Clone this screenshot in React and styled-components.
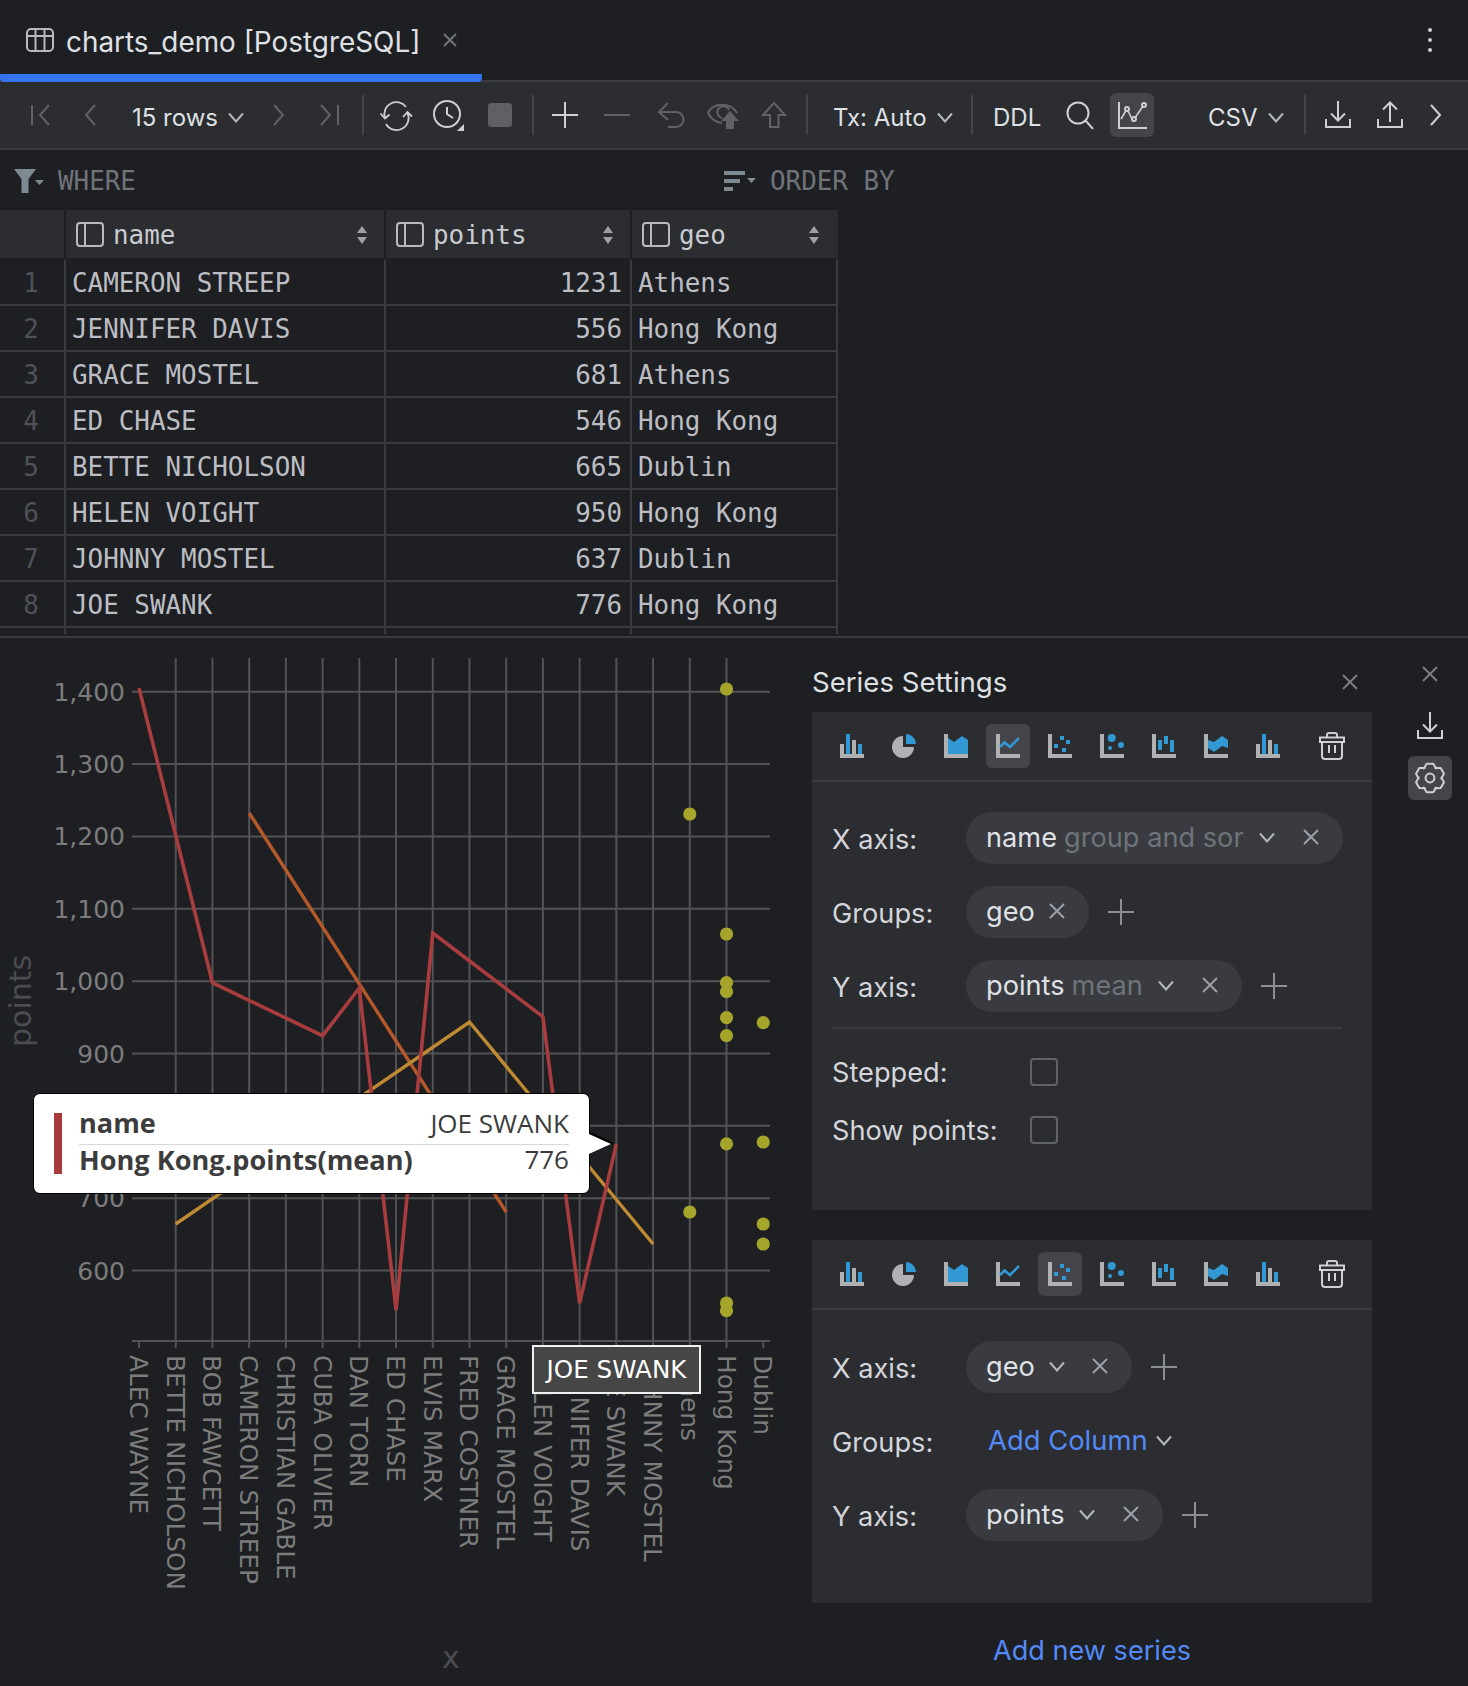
import React from "react";
import styled, { createGlobalStyle } from "styled-components";

const MONO = `"DejaVu Sans Mono", "Liberation Mono", monospace`;
const SANS = `Inter, "Noto Sans", sans-serif`;
const CHART = `"DejaVu Sans", sans-serif`;

const ON = "#ced0d6";
const OFF = "#5f6268";
const BLUE = "#3399d4";
const GRAY = "#afb1b3";

const Global = createGlobalStyle`
  html, body { margin: 0; padding: 0; background: #1e1f22; }
  * { box-sizing: border-box; }
  body { font-family: ${SANS}; }
`;

const Page = styled.div`
  width: 1468px;
  height: 1686px;
  overflow: hidden;
  display: flex;
  flex-direction: column;
  background: #1e1f22;
  color: #dfe1e5;
`;

/* ---------- tabs ---------- */
const TabBar = styled.div`
  height: 82px;
  flex: none;
  display: flex;
  align-items: flex-start;
  justify-content: space-between;
  border-bottom: 2px solid #393b40;
`;
const Tab = styled.div`
  width: 482px;
  height: 82px;
  padding: 28px 0 0 26px;
  display: flex;
  align-items: flex-start;
  border-bottom: 8px solid #3574f0;
  border-radius: 0 0 4px 4px;
`;
const TabTitle = styled.span`
  font-size: 27.9px;
  line-height: 28px;
  margin-left: 12px;
  color: #dfe1e5;
  white-space: nowrap;
`;
const TabClose = styled.span`
  display: flex;
  margin: 4px 0 0 22px;
`;
const Kebab = styled.div`
  margin: 28px 36px 0 0;
  display: flex;
  flex-direction: column;
  gap: 6px;
  span {
    width: 4px;
    height: 4px;
    border-radius: 50%;
    background: ${ON};
  }
`;

/* ---------- toolbar ---------- */
const Toolbar = styled.div`
  height: 68px;
  flex: none;
  display: flex;
  align-items: center;
  padding-left: 19px;
  background: #2b2d30;
  border-bottom: 2px solid #393b40;
`;
const Btn = styled.div`
  width: 44px;
  height: 44px;
  flex: none;
  display: flex;
  align-items: center;
  justify-content: center;
  margin-left: ${(p) => p.$ml ?? 0}px;
  border-radius: 6px;
  background: ${(p) => (p.$active ? "#43454a" : "transparent")};
`;
const Sep = styled.div`
  width: 2px;
  height: 40px;
  flex: none;
  margin-left: ${(p) => p.$ml ?? 10}px;
  background: #43454a;
`;
const ToolText = styled.div`
  flex: none;
  width: ${(p) => p.$w}px;
  margin-left: ${(p) => p.$ml ?? 0}px;
  padding-top: 4px;
  display: flex;
  align-items: center;
  gap: 9px;
  font-size: 24px;
  color: #dfe1e5;
  white-space: nowrap;
`;

/* ---------- filter row ---------- */
const FilterRow = styled.div`
  height: 60px;
  flex: none;
  display: flex;
  align-items: center;
  padding: 2px 0 0 14px;
  font-family: ${MONO};
  font-size: 25.9px;
  color: #6f737a;
`;
const FilterPart = styled.div`
  display: flex;
  align-items: center;
  gap: 14px;
  width: ${(p) => p.$w}px;
`;

/* ---------- table ---------- */
const Table = styled.div`
  width: 838px;
  height: 424px;
  flex: none;
  overflow: hidden;
  font-family: ${MONO};
  font-size: 25.9px;
`;
const HeadRow = styled.div`
  height: 48px;
  display: grid;
  grid-template-columns: 64px 320px 246px 206px;
  background: #2b2d30;
`;
const HeadCell = styled.div`
  display: flex;
  align-items: center;
  gap: 9px;
  padding: 2px 0 0 10px;
  border-left: 2px solid #1e1f22;
  color: #c9cbd0;
`;
const SortMark = styled.span`
  display: flex;
  margin-left: auto;
  margin-right: 16px;
`;
const RowNoHead = styled.div``;
const Body = styled.div`
  padding-top: 2px;
`;
const Row = styled.div`
  height: ${(p) => p.$h ?? 46}px;
  display: grid;
  grid-template-columns: 64px 320px 246px 208px;
  align-items: stretch;
  border-bottom: ${(p) => (p.$h ? "0" : "2px solid #393b40")};
  color: #bcbec4;
`;
const NumCell = styled.div`
  display: flex;
  align-items: center;
  justify-content: center;
  padding: 2px 2px 0 0;
  color: #4e5157;
`;
const Cell = styled.div`
  display: flex;
  align-items: center;
  justify-content: ${(p) => (p.$right ? "flex-end" : "flex-start")};
  padding: 2px 8px 0 6px;
  border-left: 2px solid #393b40;
  border-right: ${(p) => (p.$last ? "2px solid #393b40" : "0")};
  white-space: nowrap;
`;

const PaneLine = styled.div`
  height: 2px;
  flex: none;
  margin-top: 2px;
  background: #393b40;
`;

/* ---------- bottom pane ---------- */
const Pane = styled.div`
  flex: 1;
  display: flex;
  min-height: 0;
`;
const ChartArea = styled.div`
  position: relative;
  width: 812px;
  flex: none;
`;
const ChartSvg = styled.svg`
  display: block;
  width: 812px;
  height: 1048px;
  text {
    font-family: ${CHART};
  }
`;
const Tooltip = styled.div`
  position: absolute;
  left: 33px;
  top: 455px;
  width: 557px;
  height: 101px;
  padding: 0 20px;
  display: flex;
  align-items: center;
  gap: 17px;
  background: #fff;
  border: 1px solid #000;
  border-radius: 7px;
  font-family: "Open Sans", ${CHART};
  color: #3c3c3c;
  &::before {
    content: "";
    position: absolute;
    right: -25px;
    top: 38px;
    border-left: 24px solid #000;
    border-top: 11px solid transparent;
    border-bottom: 11px solid transparent;
  }
  &::after {
    content: "";
    position: absolute;
    right: -22px;
    top: 40px;
    border-left: 22px solid #fff;
    border-top: 10px solid transparent;
    border-bottom: 10px solid transparent;
  }
`;
const TipBar = styled.div`
  width: 8px;
  height: 61px;
  flex: none;
  background: #a63a3c;
`;
const TipRows = styled.div`
  flex: 1;
  display: flex;
  flex-direction: column;
`;
const TipRow = styled.div`
  height: 36px;
  padding-bottom: 6px;
  display: flex;
  align-items: center;
  justify-content: space-between;
  font-size: 26px;
  border-top: ${(p) => (p.$line ? "1px solid #d8d8d8" : "0")};
  b {
    font-size: 27.1px;
    font-weight: 700;
  }
`;

/* ---------- settings ---------- */
const Settings = styled.div`
  width: 560px;
  flex: none;
  display: flex;
  flex-direction: column;
`;
const SettingsHead = styled.div`
  height: 74px;
  display: flex;
  align-items: center;
  justify-content: space-between;
  padding: 14px 13px 0 0;
  font-size: 27.6px;
  color: #dfe1e5;
`;
const Card = styled.div`
  background: #2b2d30;
  margin-bottom: 30px;
`;
const CardTools = styled.div`
  height: 70px;
  display: flex;
  align-items: center;
  padding-left: 18px;
  gap: 8px;
  border-bottom: 2px solid #393b40;
`;
const TrashBtn = styled(Btn)`
  margin-left: 12px;
`;
const CardBody = styled.div`
  padding: ${(p) => p.$top}px 30px ${(p) => p.$bottom}px 20px;
  display: flex;
  flex-direction: column;
  gap: 22px;
`;
const FieldRow = styled.div`
  height: 52px;
  display: flex;
  align-items: center;
`;
const FieldLabel = styled.div`
  width: 134px;
  flex: none;
  font-size: 27.2px;
  color: #d4d6dc;
  padding-top: 3px;
`;
const Pill = styled.div`
  height: 52px;
  display: flex;
  align-items: center;
  padding: 0 23px 2px 20px;
  border-radius: 26px;
  background: #393b40;
  font-size: 27.2px;
  color: #dfe1e5;
  white-space: nowrap;
`;
const Muted = styled.span`
  color: #6f737a;
  margin-left: 7px;
`;
const PillIcon = styled.span`
  display: flex;
  margin-left: ${(p) => p.$ml}px;
`;
const AddBtn = styled.span`
  display: flex;
  margin-left: 19px;
`;
const Rule = styled.div`
  height: 2px;
  margin: -7px 0 7px;
  background: #393b40;
`;
const CheckRow = styled.div`
  height: 28px;
  display: flex;
  align-items: center;
  margin-top: ${(p) => p.$mt ?? 0}px;
`;
const CheckLabel = styled.div`
  width: 198px;
  flex: none;
  font-size: 27.2px;
  color: #d4d6dc;
`;
const Check = styled.div`
  width: 28px;
  height: 28px;
  border: 2px solid #5f6268;
  border-radius: 4px;
`;
const LinkText = styled.div`
  display: flex;
  align-items: center;
  gap: 7px;
  margin-left: 22px;
  font-size: 27.4px;
  color: #548af7;
  padding-bottom: 2px;
`;
const AddSeries = styled.div`
  margin-top: 1px;
  text-align: center;
  font-size: 27.1px;
  color: #548af7;
`;
const Rail = styled.div`
  margin-left: 36px;
  padding-top: 14px;
  display: flex;
  flex-direction: column;
  gap: 8px;
`;

/* ---------- icons ---------- */
const Glyph = styled.svg.attrs((p) => ({
  width: p.$s ?? 24,
  height: p.$s ?? 24,
  viewBox: `0 0 ${p.$s ?? 24} ${p.$s ?? 24}`,
  fill: "none",
}))`
  display: block;
  flex: none;
  color: ${(p) => p.$c ?? ON};
  stroke: currentColor;
  stroke-width: ${(p) => p.$w ?? 2};
`;

const Chevron = ({ c = "#b4b8bf" }) => (
  <Glyph $s={18} $c={c}>
    <path d="M2 5.5l7 8 7-8" />
  </Glyph>
);
const Cross = ({ c = "#9da0a8", s = 18 }) => (
  <Glyph $s={s} $c={c}>
    <path d={`M2 2L${s - 2} ${s - 2}M${s - 2} 2L2 ${s - 2}`} />
  </Glyph>
);
const Plus = ({ c = "#8c8f96", s = 26 }) => (
  <Glyph $s={s} $c={c}>
    <path d={`M${s / 2} 0V${s}M0 ${s / 2}H${s}`} />
  </Glyph>
);
const TableIcon = () => (
  <Glyph $s={28} $c="#b8bac0">
    <rect x="1" y="1" width="26" height="22" rx="4" />
    <path d="M1 8H27M9.5 1V23M18.5 1V23" />
  </Glyph>
);
const ColIcon = () => (
  <Glyph $s={28} $c="#b8bac0">
    <rect x="1" y="2" width="26" height="23" rx="3" />
    <path d="M9 2V25" />
  </Glyph>
);
const SortIcon = () => (
  <svg width="12" height="18" viewBox="0 0 12 18" fill="#9da0a8">
    <path d="M6 0l5 7H1zM6 18l5-7H1z" />
  </svg>
);
const FirstIcon = () => (
  <Glyph $c={OFF}>
    <path d="M3 2V22M20 2l-9 10 9 10" />
  </Glyph>
);
const PrevIcon = () => (
  <Glyph $c={OFF}>
    <path d="M16 2l-9 10 9 10" />
  </Glyph>
);
const NextIcon = ({ c = OFF }) => (
  <Glyph $c={c}>
    <path d="M8 2l9 10-9 10" />
  </Glyph>
);
const LastIcon = () => (
  <Glyph $c={OFF}>
    <path d="M21 2V22M4 2l9 10-9 10" />
  </Glyph>
);
const RefreshIcon = () => (
  <Glyph $s={34} $w={1.8}>
    <path d="M6 20A12 12 0 0 1 27 9" />
    <path d="M28 14A12 12 0 0 1 7 26" />
    <path d="M1.5 15.5L6 20.5l4.5-4" />
    <path d="M24 19l4.5-5 4.5 4.5" />
  </Glyph>
);
const ClockIcon = () => (
  <Glyph $s={34}>
    <circle cx="16" cy="16" r="13" />
    <path d="M16 9v7l6 4" />
    <path d="M33 26v7h-7z" fill={ON} stroke="none" />
  </Glyph>
);
const StopIcon = () => (
  <svg width="24" height="24" viewBox="0 0 24 24">
    <rect width="24" height="24" rx="3.5" fill="#5f6063" />
  </svg>
);
const MinusIcon = () => (
  <Glyph $s={26} $c={OFF}>
    <path d="M0 13H26" />
  </Glyph>
);
const UndoIcon = () => (
  <Glyph $s={28} $c={OFF}>
    <path d="M11 2L2 11l9 8" />
    <path d="M2 11H19a7.5 7.5 0 0 1 0 15H11" />
  </Glyph>
);
const EyeUpIcon = () => (
  <Glyph $s={34} $c={OFF}>
    <path d="M2 15C7 4 25 4 31 15" />
    <path d="M2 15C5 21 9 24 16 25" />
    <path d="M16 20a6 6 0 1 1 7-8" />
    <path d="M24 13l9 10h-5v8h-8v-8h-5z" fill={OFF} stroke="none" />
  </Glyph>
);
const UpIcon = () => (
  <Glyph $s={26} $c={OFF}>
    <path d="M13 1L24 13H17.5V25H9V13H2z" />
  </Glyph>
);
const SearchIcon = () => (
  <Glyph $s={28}>
    <circle cx="12" cy="12" r="10.5" />
    <path d="M19.5 19.5L27 28" />
  </Glyph>
);
const TrendIcon = () => (
  <Glyph $s={30}>
    <path d="M2 2V28H30" />
    <path d="M4 19L10 9l6 12L26 6" strokeWidth="1.6" />
    <circle cx="10" cy="9" r="2" fill="#43454a" />
    <circle cx="17" cy="19" r="2" fill="#43454a" />
    <circle cx="27" cy="5" r="2" fill="#43454a" />
  </Glyph>
);
const DownloadIcon = () => (
  <Glyph $s={28}>
    <path d="M14 0V19M7 12.5l7 7 7-7" />
    <path d="M2 18V26H26V18" />
  </Glyph>
);
const UploadIcon = () => (
  <Glyph $s={28}>
    <path d="M14 2V21M7 8.5l7-7 7 7" />
    <path d="M2 18V26H26V18" />
  </Glyph>
);
const FilterIcon = () => (
  <svg width="30" height="24" viewBox="0 0 30 24" fill="#7d8a91">
    <path d="M0 0H22L14.5 10V24H7.5V10z" />
    <path d="M21 11h9l-4.5 5z" />
  </svg>
);
const OrderIcon = () => (
  <svg width="32" height="20" viewBox="0 0 32 20" fill="#7d8a91">
    <rect width="21" height="4" />
    <rect y="8" width="16" height="4" />
    <rect y="16" width="9" height="4" />
    <path d="M23 7h9l-4.5 5z" />
  </svg>
);
// six lobes, flat on top, as the IDE's gear
const gearPath = Array.from({ length: 6 }, (_, k) => {
  const at = (deg, r) => {
    const a = ((k * 60 - 90 + deg) * Math.PI) / 180;
    return `${(16 + r * Math.cos(a)).toFixed(2)} ${(16 + r * Math.sin(a)).toFixed(2)}`;
  };
  return `${k === 0 ? "M" : "L"}${at(-33, 11.4)}L${at(-13, 14.6)}L${at(13, 14.6)}L${at(33, 11.4)}`;
}).join("") + "Z";
const GearIcon = () => (
  <Glyph $s={32}>
    <path d={gearPath} strokeLinejoin="round" />
    <circle cx="16" cy="16" r="4.4" />
  </Glyph>
);
const TrashIcon = () => (
  <Glyph $s={28} $c="#ced0d6">
    <path d="M1 5.5H25V10H1z" transform="translate(1 0)" />
    <path d="M9 5V3a2 2 0 0 1 2-2h6a2 2 0 0 1 2 2v2" />
    <path d="M4 10V24a3 3 0 0 0 3 3H21a3 3 0 0 0 3-3V10" />
    <path d="M11 13V21M17 13V21" />
  </Glyph>
);

const Axes = () => <path d="M0 0H4V20H24V24H0z" fill={GRAY} />;
const ChartGlyph = ({ children }) => (
  <svg width="24" height="24" viewBox="0 0 24 24">
    {children}
  </svg>
);
const BarsGlyph = () => (
  <ChartGlyph>
    <path d="M0 20H24V24H0zM0 10H4V20H0zM12 6H16V20H12z" fill={GRAY} />
    <path d="M6 0H10V20H6zM18 10H22V20H18z" fill={BLUE} />
  </ChartGlyph>
);
const seriesIcons = [
  BarsGlyph,
  () => (
    <ChartGlyph>
      <path d="M11 2A11 11 0 1 0 22 13H11z" fill={GRAY} />
      <path d="M14 0A10 10 0 0 1 24 10H14z" fill={BLUE} />
    </ChartGlyph>
  ),
  () => (
    <ChartGlyph>
      <Axes />
      <path d="M4 4L10 8L18 2L24 6V20H4z" fill={BLUE} />
    </ChartGlyph>
  ),
  () => (
    <ChartGlyph>
      <Axes />
      <path d="M4 13L8.5 8.5L14 13L23 4" fill="none" stroke={BLUE} strokeWidth="2.6" />
    </ChartGlyph>
  ),
  () => (
    <ChartGlyph>
      <Axes />
      <path d="M6 10h4v4H6zM12 2h4v4h-4zM14 14h4v4h-4zM18 6h4v4h-4z" fill={BLUE} />
    </ChartGlyph>
  ),
  () => (
    <ChartGlyph>
      <Axes />
      <circle cx="11.7" cy="4" r="4" fill={BLUE} />
      <circle cx="21" cy="11" r="3" fill={BLUE} />
      <circle cx="10" cy="14" r="2" fill={BLUE} />
    </ChartGlyph>
  ),
  () => (
    <ChartGlyph>
      <Axes />
      <path d="M6 6h4v10H6zM12 2h4v8h-4zM18 6h4v12h-4z" fill={BLUE} />
    </ChartGlyph>
  ),
  () => (
    <ChartGlyph>
      <Axes />
      <path d="M4 6L10 8L18 2L24 6V14L18 12L10 18L4 14z" fill={BLUE} />
    </ChartGlyph>
  ),
  BarsGlyph,
];

/* ---------- data ---------- */
const rows = [
  ["CAMERON STREEP", 1231, "Athens"],
  ["JENNIFER DAVIS", 556, "Hong Kong"],
  ["GRACE MOSTEL", 681, "Athens"],
  ["ED CHASE", 546, "Hong Kong"],
  ["BETTE NICHOLSON", 665, "Dublin"],
  ["HELEN VOIGHT", 950, "Hong Kong"],
  ["JOHNNY MOSTEL", 637, "Dublin"],
  ["JOE SWANK", 776, "Hong Kong"],
];

const cats = [
  "ALEC WAYNE", "BETTE NICHOLSON", "BOB FAWCETT", "CAMERON STREEP", "CHRISTIAN GABLE",
  "CUBA OLIVIER", "DAN TORN", "ED CHASE", "ELVIS MARX", "FRED COSTNER", "GRACE MOSTEL",
  "HELEN VOIGHT", "JENNIFER DAVIS", "JOE SWANK", "JOHNNY MOSTEL", "Athens", "Hong Kong", "Dublin",
];
const xAt = (i) => 139 + i * 36.72;
const ticks = [1400, 1300, 1200, 1100, 1000, 900, 800, 700, 600];
const yAt = (v) => 691.7 + (1400 - v) * 0.7236;

const redLine = [[0, 688], [2, 982.7], [5, 1035.7], [6, 988], [7, 1310], [8, 933], [11, 1016.7], [12, 1303], [13, 1144]];
const rustLine = [[3, 813], [10, 1212]];
const amberLine = [[1, 1224], [9, 1022], [14, 1244]];
const dots = [
  [15, 814], [15, 1212],
  [16, 689], [16, 934], [16, 982.7], [16, 991.7], [16, 1017.7], [16, 1035.7], [16, 1143.8], [16, 1303], [16, 1310.7],
  [17, 1022.7], [17, 1142], [17, 1224], [17, 1244],
];
const toPoints = (line) => line.map(([i, y]) => `${xAt(i)},${y}`).join(" ");

const Chart = () => (
  <ChartSvg viewBox="0 638 812 1048">
    {ticks.map((v) => (
      <g key={v}>
        <line x1="132" x2="770" y1={yAt(v)} y2={yAt(v)} stroke="#525355" strokeWidth="2" />
        {v !== 800 && (
          <text x="125" y={yAt(v) + 9} textAnchor="end" fontSize="25" fill="#7c7c7c">
            {v.toLocaleString("en-US")}
          </text>
        )}
      </g>
    ))}
    {cats.map((c, i) => (
      <g key={c}>
        {i > 0 && i < 17 && (
          <line x1={xAt(i)} x2={xAt(i)} y1="658" y2="1341" stroke="#525355" strokeWidth="2" />
        )}
        <line x1={xAt(i)} x2={xAt(i)} y1="1341" y2="1348" stroke="#525355" strokeWidth="2" />
      </g>
    ))}
    <line x1="132" x2="770" y1="1341" y2="1341" stroke="#525355" strokeWidth="2" />
    {cats.map((c, i) => (
      <text
        key={c}
        transform={`translate(${xAt(i) - 9} 1355) rotate(90)`}
        fontSize="24.8"
        fill="#7c7c7c"
      >
        {c}
      </text>
    ))}
    <polyline points={toPoints(rustLine)} fill="none" stroke="#b5592a" strokeWidth="3.4" />
    <polyline points={toPoints(amberLine)} fill="none" stroke="#c08a33" strokeWidth="3.4" />
    <polyline points={toPoints(redLine)} fill="none" stroke="#a83c3e" strokeWidth="3.6" />
    {dots.map(([i, y]) => (
      <circle key={`${i}-${y}`} cx={xAt(i)} cy={y} r="6.6" fill="#a5a52b" />
    ))}
    <rect x="533" y="1346" width="167" height="47" fill="#464646" stroke="#f0f0f0" strokeWidth="2" />
    <text x="616.5" y="1377.5" textAnchor="middle" fontSize="24.6" fill="#fff">JOE SWANK</text>
    <text transform="translate(31 1047) rotate(-90)" fontSize="30" fill="#4a4c50">points</text>
    <text x="451" y="1668" textAnchor="middle" fontSize="30" fill="#4a4c50">x</text>
  </ChartSvg>
);

const Tools = ({ active }) => (
  <CardTools>
    {seriesIcons.map((Icon, i) => (
      <Btn key={i} $active={i === active}>
        <Icon />
      </Btn>
    ))}
    <TrashBtn>
      <TrashIcon />
    </TrashBtn>
  </CardTools>
);

export default function App() {
  return (
    <Page>
      <Global />
      <TabBar>
        <Tab>
          <TableIcon />
          <TabTitle>charts_demo [PostgreSQL]</TabTitle>
          <TabClose>
            <Cross c="#6f737a" s={16} />
          </TabClose>
        </Tab>
        <Kebab>
          <span />
          <span />
          <span />
        </Kebab>
      </TabBar>

      <Toolbar>
        <Btn><FirstIcon /></Btn>
        <Btn $ml={6}><PrevIcon /></Btn>
        <ToolText $w={112} $ml={19}>15 rows <Chevron /></ToolText>
        <Btn $ml={12}><NextIcon /></Btn>
        <Btn $ml={7}><LastIcon /></Btn>
        <Sep $ml={11} />
        <Btn $ml={10}><RefreshIcon /></Btn>
        <Btn $ml={8}><ClockIcon /></Btn>
        <Btn $ml={8}><StopIcon /></Btn>
        <Sep />
        <Btn $ml={9}><Plus c={ON} /></Btn>
        <Btn $ml={8}><MinusIcon /></Btn>
        <Btn $ml={10}><UndoIcon /></Btn>
        <Btn $ml={8}><EyeUpIcon /></Btn>
        <Btn $ml={7}><UpIcon /></Btn>
        <Sep />
        <ToolText $w={123} $ml={25}>Tx: Auto <Chevron /></ToolText>
        <Sep $ml={15} />
        <ToolText $w={55} $ml={20}>DDL</ToolText>
        <Btn $ml={10}><SearchIcon /></Btn>
        <Btn $ml={8} $active><TrendIcon /></Btn>
        <ToolText $w={87} $ml={54}>CSV <Chevron /></ToolText>
        <Sep $ml={9} />
        <Btn $ml={10}><DownloadIcon /></Btn>
        <Btn $ml={8}><UploadIcon /></Btn>
        <Btn $ml={1}><NextIcon c={ON} /></Btn>
      </Toolbar>

      <FilterRow>
        <FilterPart $w={710}><FilterIcon /> WHERE</FilterPart>
        <FilterPart><OrderIcon /> ORDER BY</FilterPart>
      </FilterRow>

      <Table>
        <HeadRow>
          <RowNoHead />
          <HeadCell><ColIcon /> name <SortMark><SortIcon /></SortMark></HeadCell>
          <HeadCell><ColIcon /> points <SortMark><SortIcon /></SortMark></HeadCell>
          <HeadCell><ColIcon /> geo <SortMark><SortIcon /></SortMark></HeadCell>
        </HeadRow>
        <Body>
          {rows.map(([name, points, geo], i) => (
            <Row key={name}>
              <NumCell>{i + 1}</NumCell>
              <Cell>{name}</Cell>
              <Cell $right>{points}</Cell>
              <Cell $last>{geo}</Cell>
            </Row>
          ))}
          <Row $h={6}>
            <NumCell />
            <Cell />
            <Cell />
            <Cell $last />
          </Row>
        </Body>
      </Table>
      <PaneLine />

      <Pane>
        <ChartArea>
          <Chart />
          <Tooltip>
            <TipBar />
            <TipRows>
              <TipRow><b>name</b><span>JOE SWANK</span></TipRow>
              <TipRow $line><b>Hong Kong.points(mean)</b><span>776</span></TipRow>
            </TipRows>
          </Tooltip>
        </ChartArea>

        <Settings>
          <SettingsHead>
            Series Settings
            <Cross c="#7a7d84" />
          </SettingsHead>

          <Card>
            <Tools active={3} />
            <CardBody $top={30} $bottom={66}>
              <FieldRow>
                <FieldLabel>X axis:</FieldLabel>
                <Pill>
                  name<Muted>group and sor</Muted>
                  <PillIcon $ml={14}><Chevron /></PillIcon>
                  <PillIcon $ml={26}><Cross /></PillIcon>
                </Pill>
              </FieldRow>
              <FieldRow>
                <FieldLabel>Groups:</FieldLabel>
                <Pill>
                  geo
                  <PillIcon $ml={13}><Cross /></PillIcon>
                </Pill>
                <AddBtn><Plus /></AddBtn>
              </FieldRow>
              <FieldRow>
                <FieldLabel>Y axis:</FieldLabel>
                <Pill>
                  points<Muted>mean</Muted>
                  <PillIcon $ml={14}><Chevron /></PillIcon>
                  <PillIcon $ml={26}><Cross /></PillIcon>
                </Pill>
                <AddBtn><Plus /></AddBtn>
              </FieldRow>
              <Rule />
              <CheckRow $mt={0}>
                <CheckLabel>Stepped:</CheckLabel>
                <Check />
              </CheckRow>
              <CheckRow $mt={8}>
                <CheckLabel>Show points:</CheckLabel>
                <Check />
              </CheckRow>
            </CardBody>
          </Card>

          <Card>
            <Tools active={4} />
            <CardBody $top={31} $bottom={62}>
              <FieldRow>
                <FieldLabel>X axis:</FieldLabel>
                <Pill>
                  geo
                  <PillIcon $ml={13}><Chevron /></PillIcon>
                  <PillIcon $ml={25}><Cross /></PillIcon>
                </Pill>
                <AddBtn><Plus /></AddBtn>
              </FieldRow>
              <FieldRow>
                <FieldLabel>Groups:</FieldLabel>
                <LinkText>Add Column <Chevron c="#b4b8bf" /></LinkText>
              </FieldRow>
              <FieldRow>
                <FieldLabel>Y axis:</FieldLabel>
                <Pill>
                  points
                  <PillIcon $ml={13}><Chevron /></PillIcon>
                  <PillIcon $ml={26}><Cross /></PillIcon>
                </Pill>
                <AddBtn><Plus /></AddBtn>
              </FieldRow>
            </CardBody>
          </Card>

          <AddSeries>Add new series</AddSeries>
        </Settings>

        <Rail>
          <Btn><Cross c="#7a7d84" /></Btn>
          <Btn><DownloadIcon /></Btn>
          <Btn $active><GearIcon /></Btn>
        </Rail>
      </Pane>
    </Page>
  );
}
